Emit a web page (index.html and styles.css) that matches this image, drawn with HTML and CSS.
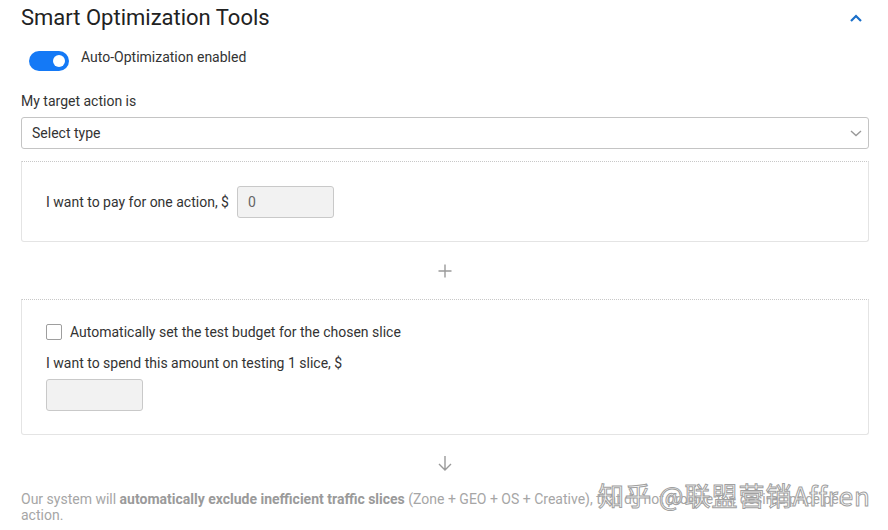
FILE: index.html
```html
<!DOCTYPE html>
<html>
<head>
<meta charset="utf-8">
<link rel="stylesheet" href="styles.css">
</head>
<body>
<div class="page">
  <div class="header">
    <h1 class="title">Smart Optimization Tools</h1>
    <svg class="collapse" width="14" height="10" viewBox="0 0 14 10"><path d="M2 8 L7 3 L12 8" fill="none" stroke="#1a6fc9" stroke-width="2.2"/></svg>
  </div>
  <div class="toggle-row">
    <span class="toggle"><span class="knob"></span></span>
    <span class="toggle-label">Auto-Optimization enabled</span>
  </div>
  <div class="field-label">My target action is</div>
  <div class="select">
    <span>Select type</span>
    <svg width="14" height="10" viewBox="0 0 14 10"><path d="M2 3 L7 7.5 L12 3" fill="none" stroke="#999" stroke-width="1.4"/></svg>
  </div>
  <div class="card card-pay">
    <span class="text">I want to pay for one action, $</span>
    <span class="input">0</span>
  </div>
  <div class="connector">
    <svg width="16" height="16" viewBox="0 0 16 16"><path d="M8 1.5 V14.5 M1.5 8 H14.5" stroke="#9a9a9a" stroke-width="1.4"/></svg>
  </div>
  <div class="card card-budget">
    <div class="check-row"><span class="checkbox"></span><span class="check-text">Automatically set the test budget for the chosen slice</span></div>
    <div class="budget-label">I want to spend this amount on testing 1 slice, $</div>
    <span class="input"></span>
  </div>
  <div class="connector arrow">
    <svg width="18" height="18" viewBox="0 0 18 18"><path d="M9 2 V16 M3 10 L9 16 L15 10" fill="none" stroke="#9a9a9a" stroke-width="1.4"/></svg>
  </div>
  <p class="note">Our system will <b>automatically exclude inefficient traffic slices</b> (Zone + GEO + OS + Creative), that do not provide the desired price per action.</p>
  <div class="watermark">知乎 @联盟营销Affren</div>
</div>
</body>
</html>
```
FILE: styles.css
```css
html, body { margin: 0; padding: 0; background: #fff; }
body { font-family: Roboto, "Noto Sans CJK SC", sans-serif; color: #333; font-size: 14px; }
.page { padding: 0 19px 0 21px; position: relative; height: 530px; overflow: hidden; }
.header { display: flex; align-items: center; justify-content: space-between; height: 35px; }
.title { margin: 0; font-size: 22px; font-weight: 400; color: #222; }
.collapse { margin-right: 6px; }
.toggle-row { display: flex; align-items: center; gap: 12px; margin-top: 14px; padding-left: 8px; height: 22px; }
.toggle { width: 40px; height: 20px; border-radius: 10px; background: #1479f6; position: relative; display: inline-block; margin-top: 2px; }
.knob { position: absolute; right: 4px; top: 4px; width: 12px; height: 12px; border-radius: 50%; background: #fff; }
.toggle-label { margin-top: -6px; }
.field-label { margin-top: 22px; line-height: 16px; }
.select { margin-top: 8px; height: 30px; border: 1px solid #c4c4c4; border-radius: 3px; display: flex; align-items: center; justify-content: space-between; padding: 0 5px 0 10px; }
.card { border: 1px solid #e4e4e4; border-top: 1px dotted #c8c8c8; border-radius: 0 0 3px 3px; padding: 24px; }
.card-pay { margin-top: 12px; display: flex; align-items: center; gap: 8px; padding-bottom: 23px; }
.input { display: block; width: 95px; height: 30px; border: 1px solid #c9c9c9; border-radius: 3px; background: #f2f2f2; line-height: 30px; text-indent: 10px; color: #666; }
.card-pay .input { display: inline-block; }
.connector { display: flex; justify-content: center; align-items: center; height: 57px; }
.arrow { height: 56px; }
.card-budget { padding-bottom: 23px; }
.check-row { display: flex; align-items: center; gap: 8px; height: 16px; }
.checkbox { width: 14px; height: 14px; border: 1px solid #9e9e9e; border-radius: 2px; display: inline-block; flex: none; }
.budget-label { margin-top: 15px; line-height: 16px; }
.card-budget .input { margin-top: 8px; }
.note { margin: 0; color: #a6a6a6; line-height: 16px; }
.note b { color: #9a9a9a; }
.watermark { position: absolute; left: 598px; top: 476px; font-size: 26px; color: rgba(255,255,255,0.85); -webkit-text-stroke: 1px #a0a0a0; letter-spacing: 1px; font-family: "Noto Sans CJK SC", sans-serif; }
```
